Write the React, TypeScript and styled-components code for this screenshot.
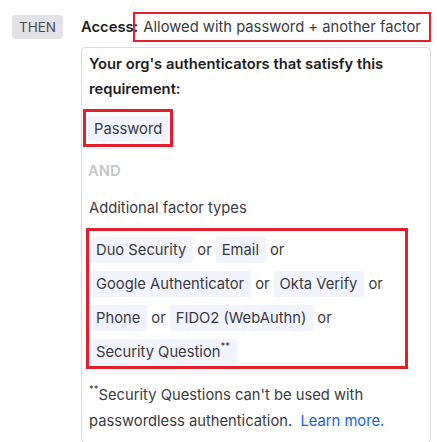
import React from 'react';
import styled, { createGlobalStyle } from 'styled-components';

const GlobalStyle = createGlobalStyle`
  html, body {
    margin: 0;
    padding: 0;
    background: #fff;
  }
  body {
    font-family: Inter, "Noto Sans", "Liberation Sans", sans-serif;
    color: #1d1d21;
    -webkit-font-smoothing: antialiased;
  }
`;

const factors = [
  'Duo Security',
  'Email',
  'Google Authenticator',
  'Okta Verify',
  'Phone',
  'FIDO2 (WebAuthn)',
];

export default function App() {
  return (
    <>
      <GlobalStyle />
      <Page>
        <Row>
          <BadgeCol>
            <Badge>THEN</Badge>
          </BadgeCol>
          <Body>
            <AccessLine>
              <Label>Access:</Label>
              <AccessBox>Allowed with password + another factor</AccessBox>
            </AccessLine>
            <Panel>
              <Heading>Your org's authenticators that satisfy this requirement:</Heading>
              <PasswordWrap>
                <Highlight $pad="4px 1px 2px 2px">
                  <Chip>Password</Chip>
                </Highlight>
              </PasswordWrap>
              <AndLabel>AND</AndLabel>
              <SubLabel>Additional factor types</SubLabel>
              <Highlight $pad="6px 6px 1px 1px" $block>
                <ChipList>
                  {factors.map((f) => (
                    <Item key={f}>
                      <Chip>{f}</Chip>
                      <Or>or</Or>
                    </Item>
                  ))}
                  <Item>
                    <Chip>
                      Security Question<Sup>**</Sup>
                    </Chip>
                  </Item>
                </ChipList>
              </Highlight>
              <Note>
                <Sup>**</Sup>Security Questions can't be used with passwordless
                authentication. <Link href="#">Learn more.</Link>
              </Note>
            </Panel>
          </Body>
        </Row>
      </Page>
    </>
  );
}

const Page = styled.div`
  width: 437px;
  height: 442px;
  box-sizing: border-box;
  padding: 12px 6px 0 12px;
`;

const Row = styled.div`
  display: flex;
`;

const BadgeCol = styled.div`
  width: 69px;
  flex-shrink: 0;
  padding-top: 3px;
`;

const Badge = styled.span`
  display: inline-block;
  box-sizing: border-box;
  height: 24px;
  width: 51px;
  line-height: 24px;
  text-align: center;
  font-size: 13.5px;
  color: #4b4b52;
  background: #e1e1e6;
  border-radius: 4px;
`;

const Body = styled.div`
  flex: 1;
  min-width: 0;
  font-size: 14.75px;
`;

const AccessLine = styled.div`
  display: flex;
  align-items: center;
  height: 30px;
`;

const Label = styled.span`
  font-weight: 600;
  color: #1d1d21;
`;

const AccessBox = styled.span`
  flex: 1;
  display: flex;
  align-items: center;
  box-sizing: border-box;
  height: 30px;
  margin: 0 1px 0 -5px;
  padding: 0 8px;
  border: 2px solid #e41e2b;
  color: #3a3a40;
  white-space: nowrap;
`;

const Highlight = styled.div<{ $pad: string; $block?: boolean }>`
  display: ${(p) => (p.$block ? 'block' : 'inline-flex')};
  align-items: center;
  box-sizing: border-box;
  border: 3px solid #e41e2b;
  padding: ${(p) => p.$pad};
  ${(p) => p.$block && 'margin: 0 22px 0 4px;'}
`;

const Panel = styled.div`
  margin-top: 5px;
  border: 1px solid #dcdce0;
  border-radius: 4px;
  padding: 4px 0 8px 0;
`;

const Heading = styled.div`
  font-weight: 600;
  line-height: 25px;
  color: #1d1d21;
  padding: 0 30px 0 7px;
`;

const PasswordWrap = styled.div`
  padding: 7px 0 0 1px;
`;

const Chip = styled.span`
  display: inline-block;
  height: 26px;
  line-height: 26px;
  padding: 0 7px 0 6px;
  background: #f1f3fd;
  color: #3a3a40;
  border-radius: 2px;
  white-space: nowrap;
`;

const AndLabel = styled.div`
  font-weight: 600;
  color: #c6c6cb;
  padding: 12px 6px 0;
  line-height: 24px;
`;

const SubLabel = styled.div`
  color: #3a3a40;
  padding: 13px 7px 8px;
  line-height: 24px;
`;

const ChipList = styled.div`
  display: flex;
  flex-wrap: wrap;
  row-gap: 8px;
`;

const Item = styled.span`
  display: inline-flex;
  align-items: center;
`;

const Or = styled.span`
  color: #3a3a40;
  margin: 0 4px;
`;

const Sup = styled.sup`
  font-size: 9.5px;
  vertical-align: top;
  line-height: 1;
  position: relative;
  top: 2px;
`;

const Note = styled.div`
  color: #3a3a40;
  line-height: 26px;
  padding: 13px 20px 0 7px;
`;

const Link = styled.a`
  color: #1662dd;
  text-decoration: none;
  margin-left: 4px;
`;
